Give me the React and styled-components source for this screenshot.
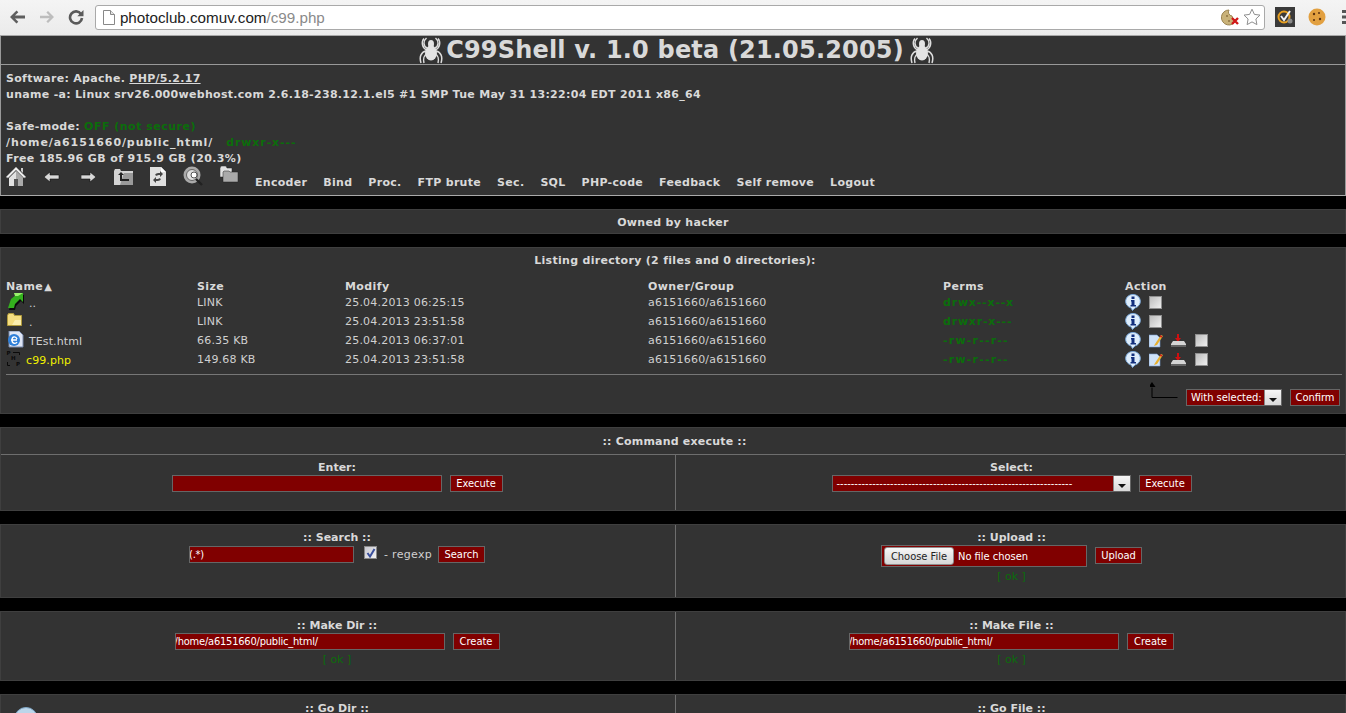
import styled, { createGlobalStyle } from "styled-components";

const GlobalStyle = createGlobalStyle`
  html, body {
    margin: 0;
    height: 713px;
    overflow: hidden;
    background: #000;
  }
  #root { height: 713px; overflow: hidden; }
  * { box-sizing: border-box; }
`;

const Browser = styled.div`
  display: flex;
  align-items: center;
  height: 36px;
  padding: 5px 0 6px 6px;
  background: linear-gradient(#f4f4f4, #ebebeb);
  border-bottom: 1px solid #a8a8a8;
`;

const NavGlyphs = styled.div`
  display: flex;
  align-items: center;
  gap: 12px;
  width: 89px;
`;

const Omnibox = styled.div`
  display: flex;
  align-items: center;
  gap: 3px;
  width: 1171px;
  height: 25px;
  padding: 0 3px 0 7px;
  background: #fff;
  border: 1px solid #a9a9a9;
  border-radius: 3px;
`;

const Url = styled.span`
  margin-left: 2px;
  font: 15.2px "Liberation Sans", Arial, sans-serif;
  color: #222;
  flex: 1;
  span { color: #8a8a8a; }
`;

const Extensions = styled.div`
  display: flex;
  align-items: center;
  gap: 13px;
  margin-left: 10px;
  svg:last-child { margin-left: 3px; }
`;

const Sheet = styled.div`
  font: 11px "DejaVu Sans", Verdana, sans-serif;
  color: #d9d9d9;
`;

const Panel = styled.section`
  background: #333;
  border: 1px solid #3f3f3f;
  margin-bottom: 13px;
  height: ${(p) => p.$h}px;
`;

const TopPanel = styled.section`
  background: #333;
  border-left: 1px solid #999;
  border-right: 1px solid #999;
  border-bottom: 1px solid #aaa;
  margin-bottom: 13px;
  height: 160px;
`;

const TitleRow = styled.h1`
  display: flex;
  justify-content: center;
  align-items: center;
  gap: 3px;
  height: 29px;
  margin: 0;
  padding-left: 7px;
  font: bold 24px "DejaVu Sans", Verdana, sans-serif;
  letter-spacing: 0.18px;
  color: #d9d9d9;
  border-bottom: 1px solid #999;
  svg:last-child { margin-left: 3px; }
`;

const Info = styled.div`
  padding: 6px 5px 0;
  font-weight: bold;
  line-height: 16px;
  letter-spacing: 0.3px;
`;

const InfoLine = styled.div`
  height: 16px;
  white-space: nowrap;
  letter-spacing: ${(p) => p.$ls || 0.3}px;
  a { color: #d9d9d9; text-decoration: underline; }
`;

const Perm = styled.span`
  color: #0b6d0b;
  letter-spacing: ${(p) => p.$ls}px;
  margin-left: ${(p) => p.$gap || 0}px;
`;

const Nav = styled.nav`
  display: flex;
  align-items: flex-start;
  gap: 16px;
  height: 24px;
  margin-top: -1px;
`;

const NavLink = styled.a`
  margin-top: 10px;
  line-height: 14px;
  color: #d9d9d9;
  font-weight: bold;
  white-space: nowrap;
`;

const PanelTitle = styled.h3`
  margin: 0;
  height: ${(p) => p.$h || 25}px;
  padding-left: ${(p) => p.$shift || 0}px;
  font: inherit;
  font-weight: bold;
  line-height: ${(p) => p.$h || 25}px;
  letter-spacing: ${(p) => p.$ls || 0}px;
  text-align: center;
  border-bottom: ${(p) => (p.$rule ? "1px solid #6e6e6e" : "none")};
`;

const Listing = styled.div`
  padding: 0 3px 0 5px;
  margin-top: ${(p) => p.$top || 0}px;
`;

const FileRow = styled.div`
  display: grid;
  grid-template-columns: 191px 148px 303px 295px 182px 1fr;
  height: 19px;
  align-items: center;
  letter-spacing: 0.2px;
  color: #d0d0d0;
`;

const HeadRow = styled(FileRow)`
  height: 14px;
  font-weight: bold;
  letter-spacing: 0.4px;
  color: #d9d9d9;
`;

const Sort = styled.span`
  margin-left: 1px;
  font-size: 10px;
  letter-spacing: 0;
`;

const NameCell = styled.div`
  display: flex;
  align-items: flex-start;
  height: 19px;
  gap: ${(p) => p.$gap ?? 6}px;
  color: ${(p) => p.$color || "#d0d0d0"};
  letter-spacing: 0.1px;
  span { margin-top: 4px; }
`;

const PermCell = styled.div`
  color: #0b6d0b;
  font-weight: bold;
  letter-spacing: ${(p) => p.$ls}px;
`;

const Actions = styled.div`
  display: flex;
  align-items: center;
  gap: 8px;
`;

const Check = styled.input.attrs({ type: "checkbox" })`
  appearance: none;
  width: 13px;
  height: 13px;
  margin: 0 0 0 ${(p) => p.$gap || 0}px;
  background: linear-gradient(135deg, #bdbdbd, #efefef);
  border: 1px solid #8f8f8f;
`;

const Rule = styled.hr`
  margin: 5px 0 0;
  border: 0;
  border-top: 1px solid #777;
`;

const SelectedBar = styled.div`
  display: flex;
  align-items: flex-end;
  justify-content: flex-end;
  gap: 8px;
  height: 31px;
  padding-right: 2px;
`;

const ArrowMark = styled.svg`
  margin: 0 0 7px;
`;

const FieldSelect = styled.div`
  display: flex;
  align-items: center;
  justify-content: space-between;
  width: ${(p) => p.$w}px;
  height: 17px;
  padding-left: ${(p) => p.$pad || 4}px;
  background: #800000;
  border: 1px solid #666;
  color: #fff;
  font: 11px "DejaVu Sans Condensed", Tahoma, sans-serif;
  white-space: nowrap;
  overflow: hidden;
`;

const DropButton = styled.span`
  display: flex;
  align-items: flex-end;
  justify-content: center;
  flex: none;
  width: 17px;
  height: 15px;
  padding-bottom: 3px;
  background: linear-gradient(#f6f6f6, #d8d8d8);
  border-left: 1px solid #888;
`;

const RedButton = styled.button`
  height: 17px;
  width: ${(p) => p.$w}px;
  padding: 0;
  margin-top: ${(p) => p.$top || 0}px;
  background: #800000;
  border: 1px solid #666;
  color: #fff;
  font: 11px "DejaVu Sans Condensed", Tahoma, sans-serif;
`;

const Columns = styled.div`
  display: grid;
  grid-template-columns: 674px 1fr;
  height: ${(p) => p.$h}px;
`;

const Cell = styled.div`
  display: flex;
  flex-direction: column;
  align-items: center;
  padding-top: ${(p) => p.$pad || 6}px;
  padding-right: ${(p) => (p.$split ? 0 : 2)}px;
  padding-left: ${(p) => (p.$split ? 2 : 0)}px;
  border-left: ${(p) => (p.$split ? "1px solid #6e6e6e" : "none")};
`;

const CellTitle = styled.div`
  height: 14px;
  line-height: 14px;
  font-weight: bold;
  margin-bottom: ${(p) => p.$gap || 0}px;
`;

const Controls = styled.div`
  display: flex;
  align-items: flex-start;
  gap: 8px;
  height: ${(p) => p.$h || 17}px;
`;

const RedInput = styled.input`
  width: ${(p) => p.$w}px;
  height: 17px;
  padding: 0;
  background: #800000;
  border: 1px solid #666;
  color: #fff;
  font: 11px "DejaVu Sans Condensed", Tahoma, sans-serif;
  letter-spacing: -0.2px;
  text-indent: -1px;
  outline: 0;
`;

const RegexpLabel = styled.label`
  display: flex;
  align-items: flex-start;
  gap: 7px;
  margin: 0 -2px 0 2px;
  color: #d0d0d0;
  letter-spacing: 0.3px;
  line-height: 17px;
`;

const TickBox = styled.span`
  display: flex;
  align-items: center;
  justify-content: center;
  width: 13px;
  height: 13px;
  background: linear-gradient(135deg, #c8c8d0, #f2f2f2);
  border: 1px solid #8a8a8a;
`;

const FileField = styled.div`
  display: flex;
  align-items: center;
  gap: 4px;
  width: 206px;
  height: 22px;
  padding-left: 2px;
  margin-top: -1px;
  background: #800000;
  border: 1px solid #666;
  color: #fff;
  font: 11px "DejaVu Sans Condensed", Tahoma, sans-serif;
`;

const ChooseFile = styled.button`
  width: 70px;
  height: 18px;
  padding: 0;
  background: linear-gradient(#f7f7f7, #d6d6d6);
  border: 1px solid #8d8d8d;
  border-radius: 3px;
  color: #222;
  font: inherit;
`;

const OkNote = styled.div`
  margin-top: 3px;
  color: #0b6d0b;
  line-height: 14px;
`;

const PartialIcon = styled.svg`
  float: left;
  margin: 5px -45px 0 13px;
`;

const GoCell = styled(Cell)`
  display: block;
  text-align: center;
`;

const Triangle = () => (
  <svg width="8" height="4" viewBox="0 0 8 4"><path d="M0 0h8L4 4z" fill="#111" /></svg>
);

const Back = () => (
  <svg width="20" height="16" viewBox="0 0 20 16"><path d="M10.500 1.500 4 8l6.500 6.500 1.800-1.800-3.300-3.300H19V6.600H9l3.300-3.300z" fill="#5e5e5e" /></svg>
);

const Forward = () => (
  <svg width="18" height="16" viewBox="0 0 18 16"><path d="M10 2l6 6-6 6-1.600-1.600 3.200-3.200H2V6.800h9.600L8.400 3.600z" fill="#bdbdbd" /></svg>
);

const Reload = () => (
  <svg width="16" height="16" viewBox="0 0 16 16">
    <path d="M13 5A6 6 0 1 0 14 9" fill="none" stroke="#5a5a5a" strokeWidth="2.600" />
    <path d="M15.500 1v6.200H9.300z" fill="#5a5a5a" />
  </svg>
);

const PageGlyph = () => (
  <svg width="12" height="15" viewBox="0 0 12 15">
    <path d="M.5.5h7l4 4v10H.5z" fill="#fff" stroke="#888" />
    <path d="M7.500.5v4h4" fill="#e4e4e4" stroke="#888" />
  </svg>
);

const BlockedCookie = () => (
  <svg width="19" height="19" viewBox="0 0 19 19">
    <path d="M8 2a7.500 7.500 0 1 0 7 10 4 4 0 0 1-4-4 4 4 0 0 1-3-6z" fill="#c9b279" stroke="#9b8452" />
    <circle cx="6" cy="8" r="1" fill="#8c7240" />
    <circle cx="8" cy="13" r="1" fill="#8c7240" />
    <path d="M11 10l6 6m0-6-6 6" stroke="#d01818" strokeWidth="2.400" />
  </svg>
);

const Star = () => (
  <svg width="18" height="18" viewBox="0 0 18 18">
    <path d="M9 1.200l2.400 5.200 5.600.7-4.100 3.900 1 5.600L9 13.900l-4.900 2.700 1-5.600L1 7.100l5.600-.7z" fill="#fff" stroke="#8f8f8f" />
  </svg>
);

const Norton = () => (
  <svg width="20" height="20" viewBox="0 0 20 20">
    <rect width="20" height="20" fill="#3a3a3a" />
    <circle cx="9" cy="10" r="5.500" fill="none" stroke="#e8a020" strokeWidth="2" />
    <path d="M6 9l3 4 6-9" fill="none" stroke="#f2f2f2" strokeWidth="2" />
    <circle cx="15" cy="14" r="2.500" fill="#8a8a8a" />
  </svg>
);

const Cookie = () => (
  <svg width="18" height="18" viewBox="0 0 18 18">
    <circle cx="9" cy="9" r="8.500" fill="#e2a040" />
    <circle cx="6" cy="6" r="1.200" fill="#5c3210" />
    <circle cx="11" cy="5" r="1" fill="#5c3210" />
    <circle cx="12" cy="11" r="1.200" fill="#5c3210" />
    <circle cx="6" cy="12" r="1" fill="#5c3210" />
  </svg>
);

const Dots = () => (
  <svg width="4" height="16" viewBox="0 0 4 16">
    <path d="M0 1h4v3H0zM0 6.500h4v3H0zM0 12h4v3H0z" fill="#555" />
  </svg>
);

const Spider = () => (
  <svg width="24" height="27" viewBox="0 0 24 27">
    <g fill="none" stroke="#dedede" strokeWidth="1.500">
      <path d="M7.500 1C4 4 4 9 8 11M16.500 1c3.500 3 3.500 8-.5 10" />
      <path d="M5 1.500C2 5 3 11 8 13M19 1.500c3 3.500 2 9.500-3 11.500" />
      <path d="M7 14C2 15 0 20 2 26M17 14c5 1 7 6 5 12" />
      <path d="M8 17c-3 1-4 5-3 9M16 17c3 1 4 5 3 9" />
    </g>
    <ellipse cx="12" cy="7" rx="3" ry="4" fill="#e4e4e4" />
    <ellipse cx="12" cy="16" rx="6" ry="7.500" fill="#e4e4e4" />
  </svg>
);

const Home = () => (
  <svg width="22" height="21" viewBox="0 0 22 21">
    <path d="M10 1 0 11l2 1 8-8 8 8 2-1z" fill="#eee" stroke="#999" strokeWidth=".5" />
    <path d="M15 2h2v5l-2-2z" fill="#ccc" />
    <path d="M3 12l7-7 7 7v8H3z" fill="#e2e2e2" />
    <path d="M10 5l7 7v8h-7z" fill="#aaa" />
    <rect x="8" y="13" width="4" height="7" fill="#555" />
  </svg>
);

const NavBack = () => (
  <svg width="21" height="16" viewBox="0 0 21 16" style={{ marginTop: 4 }}>
    <path d="M0 7l6-5v3h9v4H6v3z" fill="#d8d8d8" stroke="#111" strokeWidth=".6" />
  </svg>
);

const NavForward = () => (
  <svg width="17" height="16" viewBox="0 0 17 16" style={{ marginTop: 4 }}>
    <path d="M15 7 9 2v3H0v4h9v3z" fill="#d8d8d8" stroke="#111" strokeWidth=".6" />
  </svg>
);

const FolderUp = () => (
  <svg width="20" height="19" viewBox="0 0 20 19" style={{ marginTop: 1 }}>
    <path d="M0 4l1-2h5l1 2h12v14H0z" fill="#d4d4d4" />
    <path d="M10 6l9 0v12H6z" fill="#9a9a9a" />
    <path d="M4 8l3-3 3 3H8v4h7v2H6V8z" fill="#222" />
  </svg>
);

const Refresh = () => (
  <svg width="17" height="19" viewBox="0 0 17 19" style={{ marginTop: 1 }}>
    <path d="M0 0h11l5 5v14H0z" fill="#e0e0e0" />
    <path d="M11 0v5h5z" fill="#fff" />
    <path d="M5 8c1-2 3-2 5-2V4l3 3-3 3V8c-2 0-3 0-3 1zM11 12c-1 2-3 2-5 2v2l-3-3 3-3v2c2 0 3 0 3-1z" fill="#444" />
  </svg>
);

const Lens = () => (
  <svg width="21" height="21" viewBox="0 0 21 21">
    <circle cx="9" cy="9" r="8.500" fill="#aaa" />
    <circle cx="9" cy="9" r="5.500" fill="#ddd" stroke="#666" />
    <circle cx="11" cy="9" r="3" fill="#fff" stroke="#555" />
    <path d="M13 13l6 6" stroke="#222" strokeWidth="2.400" />
  </svg>
);

const Folders = () => (
  <svg width="19" height="17" viewBox="0 0 19 17">
    <path d="M0 2l1-2h5l1 2h5v9H0z" fill="#e2e2e2" stroke="#222" strokeWidth=".5" />
    <path d="M3 6l1-1h5l1 1h8v10H3z" fill="#aaa" stroke="#222" strokeWidth=".5" />
  </svg>
);

const UpIcon = () => (
  <svg width="18" height="17" viewBox="0 0 18 17">
    <path d="M9 2h9v9l-3-3-5 5-1 4H3l3-9 5-4z" fill="#0a0a0a" />
    <path d="M8 0h9v9l-3-3-5 5-1 4H2l3-9 5-4z" fill="#34b01e" />
    <path d="M8 0h9l-5 3-3 0z" fill="#9bf06e" />
  </svg>
);

const FolderIcon = () => (
  <svg width="17" height="15" viewBox="0 0 17 15">
    <path d="M1.500 3.500l1-2h5l1 2h7v10H1.500z" fill="#f4dd80" stroke="#b09a3c" />
    <path d="M9 8h6v5H6z" fill="#fbeeb0" />
  </svg>
);

const HtmlIcon = () => (
  <svg width="18" height="17" viewBox="0 0 18 17">
    <path d="M3 0h10l4 4v12H3z" fill="#dfe6f5" stroke="#7788aa" />
    <circle cx="8" cy="9" r="6" fill="#2f7fd8" />
    <path d="M5 9h6M11 11c-1 2-5 2-5-2s4-4 5-1" fill="none" stroke="#fff" strokeWidth="1.400" />
  </svg>
);

const PhpIcon = () => (
  <svg width="15" height="17" viewBox="0 0 15 17">
    <path d="M7 2.500h6.500V5M1.500 12v3.500H4" fill="none" stroke="#0a0a0a" />
    <g fontFamily="DejaVu Sans, sans-serif" fontSize="5.500" fontWeight="bold" fill="#0a0a0a">
      <text x="0.500" y="5">P</text>
      <text x="5" y="10">H</text>
      <text x="10" y="16">P</text>
    </g>
  </svg>
);

const InfoIcon = () => (
  <svg width="16" height="17" viewBox="0 0 16 17">
    <path d="M8 .5a7 6.800 0 0 1 2 13.400L7.500 16.500 6 13.900A7 6.800 0 0 1 8 .5z" fill="#dfeefc" stroke="#7aa7d8" />
    <path d="M6.500 2.500h3v2.400h-3zM6 6h3.500v5H11v1.500H5.500V11h1V7.500H6z" fill="#13307e" />
  </svg>
);

const EditIcon = () => (
  <svg width="14" height="14" viewBox="0 0 14 14">
    <path d="M0 1h8l3 3v9H0z" fill="#cfe2f8" stroke="#7aa0d0" strokeWidth=".6" />
    <path d="M6 10l6-9 2 1-6 9-3 1z" fill="#e8b030" />
    <path d="M11 2l2 1" stroke="#d02020" strokeWidth="1.600" />
  </svg>
);

const SaveIcon = () => (
  <svg width="15" height="14" viewBox="0 0 15 14">
    <path d="M7 0v5" stroke="#d01010" strokeWidth="2" />
    <path d="M4 4h6L7 8z" fill="#d01010" />
    <path d="M2 7h11l2 3v3H0v-3z" fill="#d4d4d4" />
    <rect y="11" width="15" height="2.600" fill="#333" opacity=".7" />
  </svg>
);

const Tick = () => (
  <svg width="10" height="10" viewBox="0 0 10 10"><path d="M1.500 5l2.500 3.500L8.500 1" fill="none" stroke="#3a4f9c" strokeWidth="2" /></svg>
);

const rows = [
  { icon: <UpIcon />, name: "..", size: "LINK", date: "25.04.2013 06:25:15", perm: "drwx--x--x", ls: 0.8, gap: 5 },
  { icon: <FolderIcon />, name: ".", size: "LINK", date: "25.04.2013 23:51:58", perm: "drwxr-x---", ls: 0.8, gap: 6 },
  { icon: <HtmlIcon />, name: "TEst.html", size: "66.35 KB", date: "25.04.2013 06:37:01", perm: "-rw-r--r--", ls: 1.2, file: true, gap: 5 },
  { icon: <PhpIcon />, name: "c99.php", size: "149.68 KB", date: "25.04.2013 23:51:58", perm: "-rw-r--r--", ls: 1.2, file: true, gap: 5, color: "#f0f000" },
];

const navItems = ["Encoder", "Bind", "Proc.", "FTP brute", "Sec.", "SQL", "PHP-code", "Feedback", "Self remove", "Logout"];

export default function App() {
  return (
    <>
      <GlobalStyle />
      <Browser>
        <NavGlyphs>
          <Back />
          <Forward />
          <Reload />
        </NavGlyphs>
        <Omnibox>
          <PageGlyph />
          <Url>photoclub.comuv.com<span>/c99.php</span></Url>
          <BlockedCookie />
          <Star />
        </Omnibox>
        <Extensions>
          <Norton />
          <Cookie />
          <Dots />
        </Extensions>
      </Browser>
      <Sheet>
        <TopPanel>
          <TitleRow>
            <Spider />
            C99Shell v. 1.0 beta (21.05.2005)
            <Spider />
          </TitleRow>
          <Info>
            <InfoLine>Software: Apache. <a>PHP/5.2.17</a></InfoLine>
            <InfoLine>uname -a: Linux srv26.000webhost.com 2.6.18-238.12.1.el5 #1 SMP Tue May 31 13:22:04 EDT 2011 x86_64</InfoLine>
            <InfoLine />
            <InfoLine>Safe-mode: <Perm $ls={0.5}>OFF (not secure)</Perm></InfoLine>
            <InfoLine $ls={0.9}>/home/a6151660/public_html/<Perm $ls={0.9} $gap={13}>drwxr-x---</Perm></InfoLine>
            <InfoLine $ls={0.38}>Free 185.96 GB of 915.9 GB (20.3%)</InfoLine>
            <Nav>
              <Home />
              <NavBack />
              <NavForward />
              <FolderUp />
              <Refresh />
              <Lens />
              <Folders />
              {navItems.map((item) => (
                <NavLink key={item}>{item}</NavLink>
              ))}
            </Nav>
          </Info>
        </TopPanel>

        <Panel $h={25}>
          <PanelTitle $ls={0.3}>Owned by hacker</PanelTitle>
        </Panel>

        <Panel $h={167}>
          <PanelTitle $ls={0.3} $shift={4}>Listing directory (2 files and 0 directories):</PanelTitle>
          <Listing $top={6}>
            <HeadRow>
              <div>Name<Sort>▲</Sort></div>
              <div>Size</div>
              <div>Modify</div>
              <div>Owner/Group</div>
              <div>Perms</div>
              <div>Action</div>
            </HeadRow>
            {rows.map((r) => (
              <FileRow key={r.name}>
                <NameCell $gap={r.gap} $color={r.color}>
                  {r.icon}
                  <span>{r.name}</span>
                </NameCell>
                <div>{r.size}</div>
                <div>{r.date}</div>
                <div>a6151660/a6151660</div>
                <PermCell $ls={r.ls}>{r.perm}</PermCell>
                <Actions>
                  <InfoIcon />
                  {r.file && <EditIcon />}
                  {r.file && <SaveIcon />}
                  <Check $gap={r.file ? 1 : 0} />
                </Actions>
              </FileRow>
            ))}
            <Rule />
            <SelectedBar>
              <ArrowMark width="28" height="17" viewBox="0 0 28 17">
                <path d="M2 5.500V15.500H27.500" fill="none" stroke="#000" strokeWidth="1" />
                <path d="M2 0l3.500 5h-7z" fill="#000" />
              </ArrowMark>
              <FieldSelect $w={96}>
                With selected:
                <DropButton><Triangle /></DropButton>
              </FieldSelect>
              <RedButton $w={50}>Confirm</RedButton>
            </SelectedBar>
          </Listing>
        </Panel>

        <Panel $h={84}>
          <PanelTitle $h={27} $ls={0.2} $shift={3} $rule>:: Command execute ::</PanelTitle>
          <Columns $h={55}>
            <Cell>
              <CellTitle>Enter:</CellTitle>
              <Controls>
                <RedInput $w={270} />
                <RedButton $w={53}>Execute</RedButton>
              </Controls>
            </Cell>
            <Cell $split>
              <CellTitle>Select:</CellTitle>
              <Controls>
                <FieldSelect $w={299}>
                  ------------------------------------------------------------------
                  <DropButton><Triangle /></DropButton>
                </FieldSelect>
                <RedButton $w={53}>Execute</RedButton>
              </Controls>
            </Cell>
          </Columns>
        </Panel>

        <Panel $h={74}>
          <Columns $h={72}>
            <Cell>
              <CellTitle $gap={1}>:: Search ::</CellTitle>
              <Controls>
                <RedInput $w={165} defaultValue="(.*)" />
                <RegexpLabel>
                  <TickBox><Tick /></TickBox>
                  - regexp
                </RegexpLabel>
                <RedButton $w={47}>Search</RedButton>
              </Controls>
            </Cell>
            <Cell $split>
              <CellTitle $gap={1}>:: Upload ::</CellTitle>
              <Controls $h={21}>
                <FileField>
                  <ChooseFile>Choose File</ChooseFile>
                  No file chosen
                </FileField>
                <RedButton $w={47} $top={1}>Upload</RedButton>
              </Controls>
              <OkNote>[ ok ]</OkNote>
            </Cell>
          </Columns>
        </Panel>

        <Panel $h={70}>
          <Columns $h={68}>
            <Cell $pad={7}>
              <CellTitle>:: Make Dir ::</CellTitle>
              <Controls>
                <RedInput $w={270} defaultValue="/home/a6151660/public_html/" />
                <RedButton $w={47}>Create</RedButton>
              </Controls>
              <OkNote>[ ok ]</OkNote>
            </Cell>
            <Cell $pad={7} $split>
              <CellTitle>:: Make File ::</CellTitle>
              <Controls>
                <RedInput $w={270} defaultValue="/home/a6151660/public_html/" />
                <RedButton $w={47}>Create</RedButton>
              </Controls>
              <OkNote>[ ok ]</OkNote>
            </Cell>
          </Columns>
        </Panel>

        <Panel $h={70}>
          <Columns $h={68}>
            <GoCell $pad={7}>
              <PartialIcon width="24" height="24" viewBox="0 0 24 24">
                <circle cx="12" cy="12" r="11.500" fill="#bcd6ea" stroke="#7ea6c6" />
              </PartialIcon>
              <CellTitle>:: Go Dir ::</CellTitle>
            </GoCell>
            <Cell $pad={7} $split>
              <CellTitle>:: Go File ::</CellTitle>
            </Cell>
          </Columns>
        </Panel>
      </Sheet>
    </>
  );
}
